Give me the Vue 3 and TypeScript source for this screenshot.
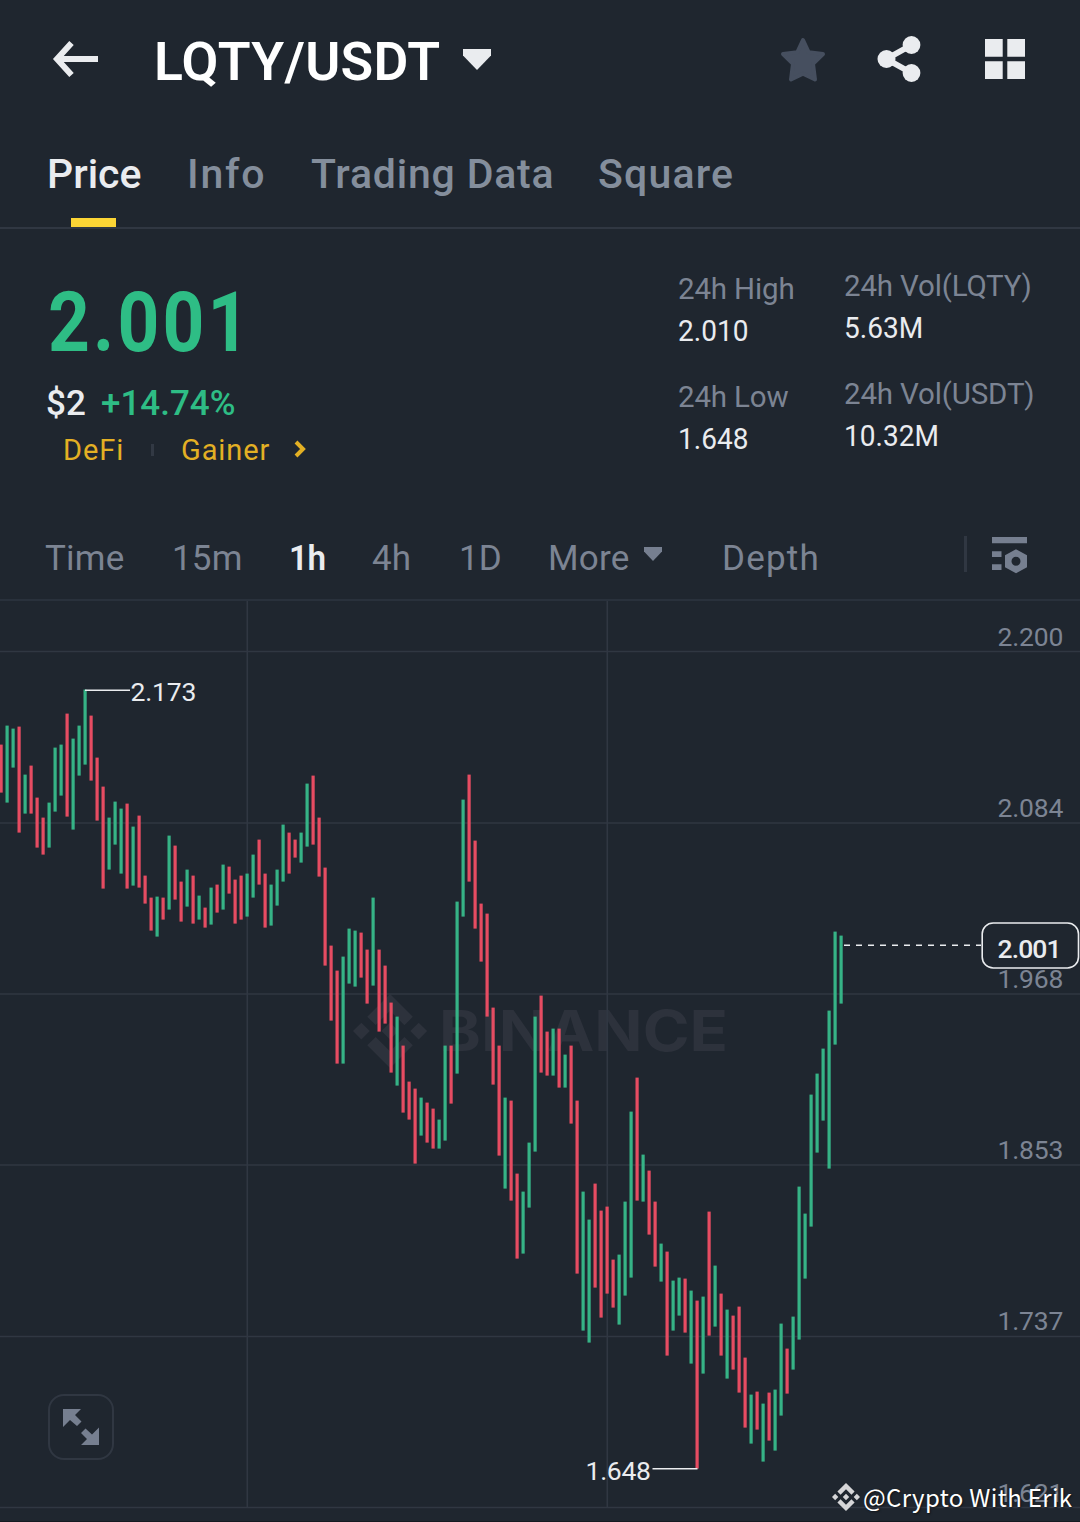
<script setup lang="ts">
type Candle = { x: number; top: number; height: number; up: boolean }

const tabs = ['Price', 'Info', 'Trading Data', 'Square']
const intervals = ['Time', '15m', '1h', '4h', '1D']

const stats = [
  [
    { label: '24h High', value: '2.010' },
    { label: '24h Low', value: '1.648' },
  ],
  [
    { label: '24h Vol(LQTY)', value: '5.63M' },
    { label: '24h Vol(USDT)', value: '10.32M' },
  ],
]

const gridRows = [51.5, 223, 394, 565, 736.5, 907.5]
const axis = ['2.200', '2.084', '1.968', '1.853', '1.737', '1.621'].map((text, i) => ({
  text,
  y: 45.5 + i * 171.2,
}))

// direction, high and low of every hourly bar, in page pixels
const series = `
R745-793 G726-803 G729-768 R727-833 G775-814 R766-814 R798-848 R818-855 G803-848 G748-812
G745-796 R714-817 G739-830 G726-776 G690-765 R716-781 R758-821 R787-889 G818-870 G802-845
G809-874 R804-889 G827-886 R816-888 R876-904 R898-931 G897-937 R898-920 G836-910 R846-900
R882-922 G870-907 R876-924 G896-920 R908-928 G888-925 R885-913 G865-910 R867-894 R880-924
R876-920 G874-917 G855-898 R840-885 R874-928 G885-926 G870-906 G825-882 R833-874 R840-858
G833-863 G784-847 R776-845 R818-877 R868-966 R946-1021 R971-1064 G957-1064 G929-984 G931-987
R933-978 R950-1004 G898-986 R950-1032 R966-1024 R1003-1073 G1017-1086 R1046-1113 R1082-1120 R1089-1164
G1098-1136 R1103-1143 R1109-1149 G1120-1149 G1046-1141 R1046-1104 G902-1074 G800-917 R775-882 R841-929
R904-962 R914-1017 R1008-1085 R1046-1156 G1098-1189 R1101-1201 R1174-1259 G1192-1254 G1143-1208 G1017-1152
R996-1073 R1032-1076 G1029-1076 R1029-1088 G1055-1088 R1046-1124 R1101-1274 G1192-1331 G1220-1343 R1184-1288
R1211-1318 R1207-1294 R1260-1308 G1255-1325 G1202-1296 G1112-1278 R1078-1201 G1155-1202 R1171-1235 R1202-1267
G1244-1282 R1252-1356 G1281-1331 G1278-1316 R1279-1333 G1291-1364 R1301-1469 G1297-1374 R1212-1336 G1266-1327
R1294-1356 G1310-1379 R1316-1370 R1307-1393 R1358-1428 G1395-1444 R1392-1430 G1404-1462 R1393-1441 G1390-1451
G1324-1416 R1349-1394 G1317-1370 G1187-1340 G1214-1279 G1095-1227 G1074-1153 G1049-1121 G1011-1169 G932-1045
G936-1004`

const candles: Candle[] = series
  .trim()
  .split(/\s+/)
  .map((entry, i) => {
    const [high, low] = entry.slice(1).split('-').map(Number)
    return { x: i * 6 - 0.5, top: high - 600.4, height: low - high, up: entry[0] === 'G' }
  })

const logoPath =
  'M38.73 53.2l24.59-24.58 24.6 24.6 14.3-14.31L63.32 0 24.42 38.9zM0 63.31L14.3 49l14.31 14.31-14.31 14.3zM38.73 73.41L63.32 98l24.6-24.6 14.31 14.29-38.9 38.91-38.91-38.88zM98 63.31L112.3 49l14.31 14.3-14.31 14.32zM77.83 63.3L63.32 48.78 48.81 63.28l14.51 14.5z'
</script>

<template>
  <main class="screen">
    <header class="header">
      <svg class="back" viewBox="0 0 46 36" width="46" height="36">
        <path d="M19.500 2L5 18l14.500 16M4 18h42" fill="none" stroke="#eaecef" stroke-width="6" />
      </svg>
      <h1 class="pair">LQTY/USDT</h1>
      <svg class="caret" viewBox="0 0 28 21" width="28" height="21">
        <path d="M0 0h28v6.500L14 21 0 6.500z" fill="#eaecef" />
      </svg>
      <div class="actions">
        <svg class="star" viewBox="0 0 46 46" width="46" height="46">
          <path d="M23 3l5.700 12.300L43 17l-10 9.800L35 42.500 23 36.700 11 42.500l2-15.700L3 17l14.300-1.700z" fill="#464f5f" stroke="#464f5f" stroke-width="4" stroke-linejoin="round" />
        </svg>
        <svg viewBox="0 0 44 46" width="44" height="46">
          <path d="M34.500 9L9.500 23l25 14" fill="none" stroke="#eaecef" stroke-width="6" />
          <g fill="#eaecef">
            <circle cx="34.500" cy="9" r="8.900" />
            <circle cx="9.500" cy="23" r="9" />
            <circle cx="34.500" cy="37" r="8.900" />
          </g>
        </svg>
        <svg viewBox="0 0 40 40" width="40" height="40">
          <path d="M0 0h17.700v17.700H0zM22.300 0H40v17.700H22.300zM0 22.300h17.700V40H0zM22.300 22.300H40V40H22.300z" fill="#eaecef" />
        </svg>
      </div>
    </header>

    <nav class="tabs">
      <span v-for="(tab, i) in tabs" :key="tab" class="tab" :class="{ active: i === 0 }">{{ tab }}</span>
    </nav>

    <section class="summary">
      <div class="quote">
        <div class="price">2.001</div>
        <div class="change"><span class="fiat">$2</span><span class="percent">+14.74%</span></div>
        <div class="tags">
          <span class="defi">DeFi</span>
          <i class="tag-line"></i>
          <span class="gainer">Gainer</span>
          <svg viewBox="0 0 12 18" width="12" height="18">
            <path d="M2 2l7 7-7 7" fill="none" stroke="#e3b024" stroke-width="4" />
          </svg>
        </div>
      </div>
      <div v-for="(column, c) in stats" :key="c" class="stats" :class="'stats-' + c">
        <dl v-for="item in column" :key="item.label" class="stat">
          <dt>{{ item.label }}</dt>
          <dd>{{ item.value }}</dd>
        </dl>
      </div>
    </section>

    <div class="toolbar">
      <span v-for="item in intervals" :key="item" :class="{ selected: item === '1h' }">{{ item }}</span>
      <span class="more">
        More
        <svg viewBox="0 0 18 14" width="18" height="14"><path d="M0 0h18v4.500L9 14 0 4.500z" fill="#767f90" /></svg>
      </span>
      <span class="depth">Depth</span>
      <i class="tool-line"></i>
      <svg class="settings" viewBox="0 0 36 37" width="36" height="37">
        <g fill="#767f90">
          <path d="M0 0h35v6.300H0zM0 14.300h9.500v5.700H0zM0 27.300h9.500V33H0z" />
          <path fill-rule="evenodd" d="M24 12.300l11 6v12l-11 6-11-6v-12zM24 19.800a4.500 4.500 0 1 0 0 9 4.500 4.500 0 0 0 0-9z" />
        </g>
      </svg>
    </div>

    <section class="chart">
      <svg class="plot" viewBox="0 0 1080 921" width="1080" height="921">
        <g class="watermark">
          <path :d="logoPath" transform="translate(353 394) scale(.585)" />
          <text x="439" y="451" textLength="289" lengthAdjust="spacingAndGlyphs">BINANCE</text>
        </g>
        <g stroke="#303742" stroke-width="1.600">
          <line v-for="y in gridRows" :key="y" x1="0" x2="1080" :y1="y" :y2="y" />
          <line x1="247.300" x2="247.300" y1="1" y2="907" />
          <line x1="607.300" x2="607.300" y1="1" y2="907" />
        </g>
        <rect
          v-for="bar in candles"
          :key="bar.x"
          :x="bar.x"
          :y="bar.top"
          width="3.200"
          :height="bar.height"
          :fill="bar.up ? '#36b386' : '#e64c62'"
        />
        <g class="axis">
          <text v-for="label in axis" :key="label.text" x="997.500" :y="label.y" textLength="66">{{ label.text }}</text>
        </g>
        <g stroke="#eaecef" stroke-width="1.600" fill="none">
          <path d="M85 90.300h45M652.500 868.800h45" />
          <path d="M844 345.200h137" stroke-dasharray="6 6" />
          <rect x="982.200" y="323" width="96.300" height="45" rx="11" fill="#1f262f" />
        </g>
        <g class="marks">
          <text x="130.500" y="100.500" textLength="66">2.173</text>
          <text x="585.500" y="879.500" textLength="65.500">1.648</text>
          <text x="997.500" y="358.200" textLength="64" class="last">2.001</text>
        </g>
      </svg>
      <button class="expand" type="button" aria-label="Expand">
        <svg viewBox="0 0 36 36" width="36" height="36">
          <path d="M0 0h18l-6 6 6.500 6.500-4.500 4.500L7 11l-7 7zM36 36H18l6-6-6-6 4.500-4.500 6.500 6 7-7z" fill="#767f90" />
        </svg>
      </button>
      <div class="credit">
        <svg viewBox="0 0 126.610 126.610" width="28" height="28"><path :d="logoPath" fill="#d6d6d8" /></svg>
        <span>@Crypto With Erik</span>
      </div>
    </section>
  </main>
</template>

<style>
body {
  background: #1f262f;
}
</style>

<style scoped>
.screen {
  display: flex;
  flex-direction: column;
  width: 1080px;
  height: 1522px;
  box-sizing: border-box;
  overflow: hidden;
  border-bottom: 1px solid #151a21;
  background: #1f262f;
  color: #eaecef;
  font-family: Roboto, "Liberation Sans", sans-serif;
  white-space: nowrap;
}
svg {
  display: block;
  flex: none;
}
.header {
  display: flex;
  align-items: center;
  height: 118px;
  padding: 0 55px 0 52px;
}
.pair {
  width: 307px;
  margin: 6px 0 0 56px;
  color: #fff;
  font-size: 53.5px;
  font-weight: 600;
  line-height: 64px;
  letter-spacing: 0.3px;
}
.caret {
  margin: 1px 0 0 2px;
}
.actions {
  display: flex;
  align-items: center;
  margin-left: auto;
}
.star {
  margin-top: 2px;
}
.actions svg + svg {
  margin-left: 51px;
}
.actions svg + svg + svg {
  margin-left: 64px;
}
.tabs {
  display: grid;
  grid-template-columns: 140px 124px 287px auto;
  height: 109px;
  padding-left: 47px;
  border-bottom: 2px solid #303742;
}
.tab {
  position: relative;
  padding-top: 32px;
  color: #848e9c;
  font-size: 41px;
  font-weight: 500;
  line-height: 48px;
  letter-spacing: 0.8px;
}
.tab:nth-child(2) {
  letter-spacing: 1.8px;
}
.tab:nth-child(4) {
  letter-spacing: 1.2px;
}
.tab.active {
  color: #eaecef;
  letter-spacing: 0;
}
.active::after {
  content: "";
  position: absolute;
  bottom: 0;
  left: 24px;
  width: 45px;
  height: 9px;
  background: #fcd535;
}
.summary {
  display: flex;
  height: 288px;
}
.quote {
  width: 631px;
  padding: 44px 0 0 47px;
}
.price {
  margin-left: 1px;
  color: #2ebd85;
  font-size: 83px;
  font-weight: 700;
  line-height: 100px;
  letter-spacing: 3.6px;
  transform: scaleX(0.88);
  transform-origin: left;
}
.change {
  display: flex;
  margin: 11px 0 0 -1px;
  font-size: 35px;
  font-weight: 500;
  line-height: 40px;
}
.fiat {
  width: 55px;
}
.percent {
  color: #2ebd85;
}
.tags {
  display: flex;
  align-items: center;
  margin-top: 7px;
  padding-left: 16px;
  color: #e3b024;
  font-size: 29px;
  line-height: 38px;
  letter-spacing: 0.9px;
}
.defi {
  width: 88px;
}
.tag-line {
  width: 3px;
  height: 12px;
  background: #323944;
}
.gainer {
  width: 113px;
  margin-left: 27px;
}
.tags svg {
  margin-bottom: 2px;
}
.stats {
  padding-top: 40px;
}
.stats-0 {
  width: 166px;
}
.stats-1 {
  padding-top: 37px;
}
.stat {
  height: 108px;
  margin: 0;
  font-size: 29.5px;
}
dt {
  color: #7c8493;
  line-height: 40px;
  letter-spacing: -0.15px;
}
dd {
  margin: 2px 0 0;
  line-height: 40px;
  transform: scaleX(0.95);
  transform-origin: left;
}
.toolbar {
  display: grid;
  grid-template-columns: 127px 117px 83px 87px 89px 174px 242px 27px auto;
  align-items: center;
  height: 84px;
  padding: 1px 0 0 45px;
  box-sizing: border-box;
  border-bottom: 2px solid #29313c;
  color: #7c8493;
  font-size: 35px;
  line-height: 42px;
  letter-spacing: 0.2px;
}
.selected {
  color: #eaecef;
  font-weight: 600;
  letter-spacing: -0.5px;
  transform: scaleX(0.95);
  transform-origin: left;
}
.depth {
  letter-spacing: 1.2px;
}
.more {
  display: flex;
  align-items: center;
  gap: 15px;
}
.more svg {
  margin-bottom: 9px;
}
.tool-line {
  width: 3px;
  height: 36px;
  margin: 0 0 9px;
  background: #303742;
}
.settings {
  margin: 0 0 6px 1px;
}
.chart {
  position: relative;
  height: 921px;
  margin-top: -1px;
}
.watermark {
  fill: #2d323c;
  font: 700 56px Inter, sans-serif;
}
.axis {
  fill: #7c8493;
  font-size: 26.5px;
}
.marks {
  fill: #eaecef;
  font-size: 26.5px;
}
.last {
  font-weight: 500;
}
.expand {
  position: absolute;
  left: 48px;
  top: 794px;
  display: grid;
  place-items: center;
  width: 66px;
  height: 66px;
  padding: 0;
  border: 2.5px solid #303742;
  border-radius: 16px;
  background: transparent;
}
.credit {
  position: absolute;
  left: 832px;
  top: 879px;
  display: flex;
  align-items: center;
  gap: 3px;
  color: #fff;
  font: 24px/36px "Noto Sans CJK SC", sans-serif;
  letter-spacing: 0.35px;
  text-shadow: 1px 1px 2px #0008;
}
</style>
